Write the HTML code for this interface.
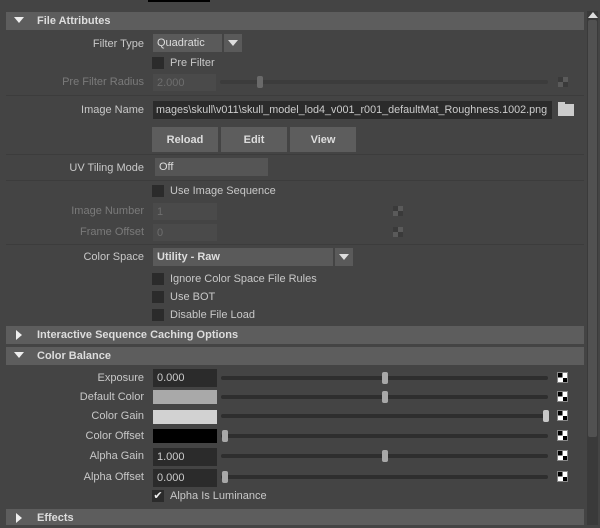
<!DOCTYPE html>
<html><head><meta charset="utf-8"><style>
*{margin:0;padding:0;box-sizing:border-box}
body{width:600px;height:525px;background:#444;overflow:hidden;position:relative;font-family:"Liberation Sans",sans-serif;font-size:11px;color:#c8c8c8}
div,span{position:absolute}
.hd{left:6px;width:578px;height:18px;background:#5d5d5d;font-weight:bold;color:#ddd;line-height:19px}
.hd span{left:31px;top:0}
.tri{left:8px;top:5px;width:0;height:0;border-left:5px solid transparent;border-right:5px solid transparent;border-top:6px solid #eee}
.trr{left:10px;top:4px;width:0;height:0;border-top:5px solid transparent;border-bottom:5px solid transparent;border-left:6px solid #eee}
.lb{right:456px;text-align:right;white-space:nowrap;line-height:16px}
.dis{color:#7a7a7a}
.fld{background:#2b2b2b;color:#ccc;line-height:19px;padding-left:4px;height:18px}
.fd{background:#4a4a4a;color:#6e6e6e;line-height:18px;padding-left:4px;height:17px}
.cb{width:12px;height:12px;background:#2b2b2b}
.ct{line-height:16px;white-space:nowrap}
.trk{height:4px;background:#2e2e2e;border-radius:2px}
.hdl{width:6px;height:12px;background:#a8a8a8;border-radius:2px}
.chk{width:11px;height:11px;background:linear-gradient(#000,#000) 0 0/50% 50% no-repeat,linear-gradient(#000,#000) 100% 100%/50% 50% no-repeat,#fff;border:1px solid #888}
.chkd{width:10px;height:10px;background:linear-gradient(#3a3a3a,#3a3a3a) 0 0/50% 50% no-repeat,linear-gradient(#3a3a3a,#3a3a3a) 100% 100%/50% 50% no-repeat,#5a5a5a}
.btn{background:#5d5d5d;height:25px;line-height:26px;text-align:center;font-weight:bold;color:#ddd}
.sep{left:6px;width:578px;height:1px;background:#3c3c3c}
.dd{background:#5a5a5a;height:18px;line-height:19px;padding-left:4px;color:#ddd}
.arr{width:0;height:0;border-left:5px solid transparent;border-right:5px solid transparent;border-top:6px solid #ddd}
</style></head><body>
<div style="left:148px;top:0;width:62px;height:2px;background:#000"></div>
<div style="left:587px;top:11px;width:11px;height:514px;background:#3a3a3a"></div>
<div style="left:588px;top:20px;width:9px;height:417px;background:#515151;border-radius:2px"></div>
<div style="left:588px;top:12px;width:0;height:0;border-left:5px solid transparent;border-right:5px solid transparent;border-bottom:6px solid #ddd"></div>

<div class="hd" style="top:12px"><div class="tri"></div><span>File Attributes</span></div>

<div class="lb" style="top:36px">Filter Type</div>
<div class="dd" style="left:153px;top:34px;width:69px">Quadratic</div>
<div style="left:224px;top:34px;width:18px;height:18px;background:#5a5a5a"><div class="arr" style="left:4px;top:6px"></div></div>
<div class="cb" style="left:152px;top:57px"></div><div class="ct" style="left:170px;top:55px">Pre Filter</div>
<div class="lb dis" style="top:74px">Pre Filter Radius</div>
<div class="fd" style="left:153px;top:74px;width:63px">2.000</div>
<div class="trk" style="left:220px;top:80px;width:328px;background:#3c3c3c"></div>
<div class="hdl" style="left:257px;top:76px;background:#6a6a6a"></div>
<div class="chkd" style="left:558px;top:77px"></div>
<div class="sep" style="top:95px"></div>

<div class="lb" style="top:102px">Image Name</div>
<div class="fld" style="left:153px;top:101px;width:399px;font-size:10.8px;white-space:nowrap;overflow:hidden;padding-left:3px">mages\skull\v011\skull_model_lod4_v001_r001_defaultMat_Roughness.1002.png</div>
<div style="left:558px;top:104px;width:16px;height:12px;background:#ccc"></div>
<div style="left:558px;top:102px;width:7px;height:3px;background:#ccc"></div>
<div class="btn" style="left:152px;top:127px;width:66px">Reload</div>
<div class="btn" style="left:221px;top:127px;width:66px">Edit</div>
<div class="btn" style="left:290px;top:127px;width:66px">View</div>
<div class="sep" style="top:154px"></div>

<div class="lb" style="top:160px">UV Tiling Mode</div>
<div class="dd" style="left:155px;top:158px;width:113px;background:#555">Off</div>
<div class="sep" style="top:180px"></div>
<div class="cb" style="left:152px;top:185px"></div><div class="ct" style="left:170px;top:183px">Use Image Sequence</div>
<div class="lb dis" style="top:203px">Image Number</div>
<div class="fd" style="left:153px;top:203px;width:64px">1</div>
<div class="chkd" style="left:393px;top:206px"></div>
<div class="lb dis" style="top:224px">Frame Offset</div>
<div class="fd" style="left:153px;top:224px;width:64px">0</div>
<div class="chkd" style="left:393px;top:227px"></div>
<div class="sep" style="top:244px"></div>

<div class="lb" style="top:249px">Color Space</div>
<div class="dd" style="left:153px;top:248px;width:180px;font-weight:bold">Utility - Raw</div>
<div style="left:335px;top:248px;width:18px;height:18px;background:#5a5a5a"><div class="arr" style="left:4px;top:6px"></div></div>
<div class="cb" style="left:152px;top:273px"></div><div class="ct" style="left:170px;top:271px">Ignore Color Space File Rules</div>
<div class="cb" style="left:152px;top:291px"></div><div class="ct" style="left:170px;top:289px">Use BOT</div>
<div class="cb" style="left:152px;top:309px"></div><div class="ct" style="left:170px;top:307px">Disable File Load</div>

<div class="hd" style="top:326px"><div class="trr"></div><span>Interactive Sequence Caching Options</span></div>
<div class="hd" style="top:347px"><div class="tri"></div><span>Color Balance</span></div>

<div class="lb" style="top:370px">Exposure</div>
<div class="fld" style="left:153px;top:369px;width:64px">0.000</div>
<div class="trk" style="left:221px;top:376px;width:327px"></div><div class="hdl" style="left:382px;top:372px"></div>
<div class="chk" style="left:557px;top:372px"></div>

<div class="lb" style="top:389px">Default Color</div>
<div style="left:153px;top:390px;width:64px;height:14px;background:#a9a9a9"></div>
<div class="trk" style="left:221px;top:395px;width:327px"></div><div class="hdl" style="left:382px;top:391px"></div>
<div class="chk" style="left:557px;top:391px"></div>

<div class="lb" style="top:408px">Color Gain</div>
<div style="left:153px;top:410px;width:64px;height:14px;background:#d2d2d2"></div>
<div class="trk" style="left:221px;top:414px;width:327px"></div><div class="hdl" style="left:543px;top:410px;background:#c8c8c8"></div>
<div class="chk" style="left:557px;top:410px"></div>

<div class="lb" style="top:428px">Color Offset</div>
<div style="left:153px;top:429px;width:64px;height:14px;background:#000"></div>
<div class="trk" style="left:221px;top:434px;width:327px"></div><div class="hdl" style="left:222px;top:430px"></div>
<div class="chk" style="left:557px;top:430px"></div>

<div class="lb" style="top:448px">Alpha Gain</div>
<div class="fld" style="left:153px;top:448px;width:64px">1.000</div>
<div class="trk" style="left:221px;top:454px;width:327px"></div><div class="hdl" style="left:382px;top:450px"></div>
<div class="chk" style="left:557px;top:450px"></div>

<div class="lb" style="top:469px">Alpha Offset</div>
<div class="fld" style="left:153px;top:469px;width:64px">0.000</div>
<div class="trk" style="left:221px;top:475px;width:327px"></div><div class="hdl" style="left:222px;top:471px"></div>
<div class="chk" style="left:557px;top:471px"></div>

<div class="cb" style="left:152px;top:490px;color:#eee;font-size:11px;line-height:13px;text-align:center">✔</div>
<div class="ct" style="left:170px;top:488px">Alpha Is Luminance</div>

<div class="hd" style="top:509px;height:16px"><div class="trr"></div><span>Effects</span></div>
</body></html>
